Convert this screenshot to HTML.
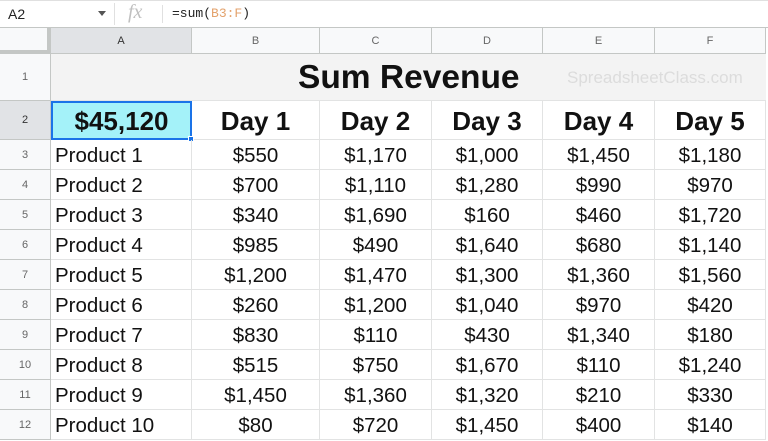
<!DOCTYPE html><html><head><style>
body{margin:0;width:768px;height:441px;overflow:hidden;background:#fff;font-family:"Liberation Sans",Arial,sans-serif;position:relative}
.a{position:absolute;box-sizing:border-box}
.h{background:#f8f9fa;color:#666;font-size:11px;text-align:center}
.c{border-right:1px solid #e2e3e3;border-bottom:1px solid #e2e3e3;font-size:20.5px;color:#111;text-align:center;display:flex;align-items:center;justify-content:center;padding-top:2px}
</style></head><body>
<div class="a" style="left:0;top:0;width:768px;height:28px;border-bottom:1px solid #c4c7c5;border-top:1px solid #e0e0e0"></div>
<div class="a" style="left:8px;top:6px;font-size:14px;color:#222">A2</div>
<div class="a" style="left:98px;top:11px;width:0;height:0;border-left:4px solid transparent;border-right:4px solid transparent;border-top:5px solid #555"></div>
<div class="a" style="left:114px;top:3px;width:1px;height:22px;background:#e0e0e0"></div>
<div class="a" style="left:128px;top:1px;font-family:'Liberation Serif',serif;font-style:italic;font-size:20px;color:#c0c0c0">fx</div>
<div class="a" style="left:162px;top:5px;width:1px;height:18px;background:#e0e0e0"></div>
<div class="a" style="left:172px;top:6px;font-size:13px;font-family:'Liberation Mono',monospace;color:#222">=sum(<span style="color:#e3a26c">B3:F</span>)</div>
<div id="g"></div>
<script>
var cols=[51,192,320,432,543,655,766],L=["A","B","C","D","E","F"];
var rows=[54,101,140,170,200,230,260,290,320,350,380,410,440];
var h='<div class="a h" style="left:0;top:28px;width:51px;height:26px;border-right:4px solid #c4c7c5;border-bottom:4px solid #c4c7c5;background:#f8f9fa"></div>';
for(var i=0;i<6;i++)h+='<div class="a h" style="left:'+cols[i]+'px;top:28px;width:'+(cols[i+1]-cols[i])+'px;height:26px;line-height:26px;border-right:1px solid #c4c7c5;border-bottom:1px solid #c4c7c5;'+(i==0?'background:#e1e3e6;color:#333':'')+'">'+L[i]+'</div>';
for(var r=0;r<12;r++)h+='<div class="a h" style="left:0;top:'+rows[r]+'px;width:51px;height:'+(rows[r+1]-rows[r])+'px;line-height:'+(rows[r+1]-rows[r])+'px;border-right:1px solid #c4c7c5;border-bottom:1px solid #c4c7c5;'+(r==1?'background:#e1e3e6;color:#333':'')+'">'+(r+1)+'</div>';
h+='<div class="a" style="left:51px;top:54px;width:715px;height:47px;background:#f3f3f3;border-bottom:1px solid #e2e3e3"></div>';
h+='<div class="a" style="left:298px;top:59px;font-size:33.5px;font-weight:bold;color:#111">Sum Revenue</div>';
h+='<div class="a" style="left:567px;top:68px;font-size:17px;color:#dcdcdc">SpreadsheetClass.com</div>';
var data=[["Product 1","$550","$1,170","$1,000","$1,450","$1,180"],["Product 2","$700","$1,110","$1,280","$990","$970"],["Product 3","$340","$1,690","$160","$460","$1,720"],["Product 4","$985","$490","$1,640","$680","$1,140"],["Product 5","$1,200","$1,470","$1,300","$1,360","$1,560"],["Product 6","$260","$1,200","$1,040","$970","$420"],["Product 7","$830","$110","$430","$1,340","$180"],["Product 8","$515","$750","$1,670","$110","$1,240"],["Product 9","$1,450","$1,360","$1,320","$210","$330"],["Product 10","$80","$720","$1,450","$400","$140"]];
var hd=["$45,120","Day 1","Day 2","Day 3","Day 4","Day 5"];
for(var i=0;i<6;i++)h+='<div class="a c" style="left:'+cols[i]+'px;top:101px;width:'+(cols[i+1]-cols[i])+'px;height:39px;font-size:26px;font-weight:bold;'+(i==0?'background:#a4f2f9;border:2px solid #1a73e8;':'')+'">'+hd[i]+'</div>';
h+='<div class="a" style="left:188px;top:136px;width:6px;height:6px;background:#1a73e8;border:1px solid #fff"></div>';
for(var r=0;r<10;r++)for(var i=0;i<6;i++)h+='<div class="a c" style="left:'+cols[i]+'px;top:'+rows[r+2]+'px;width:'+(cols[i+1]-cols[i])+'px;height:30px;'+(i==0?'justify-content:flex-start;padding-left:4px;':'')+'">'+data[r][i]+'</div>';
document.getElementById('g').innerHTML=h;
</script>
</body></html>
